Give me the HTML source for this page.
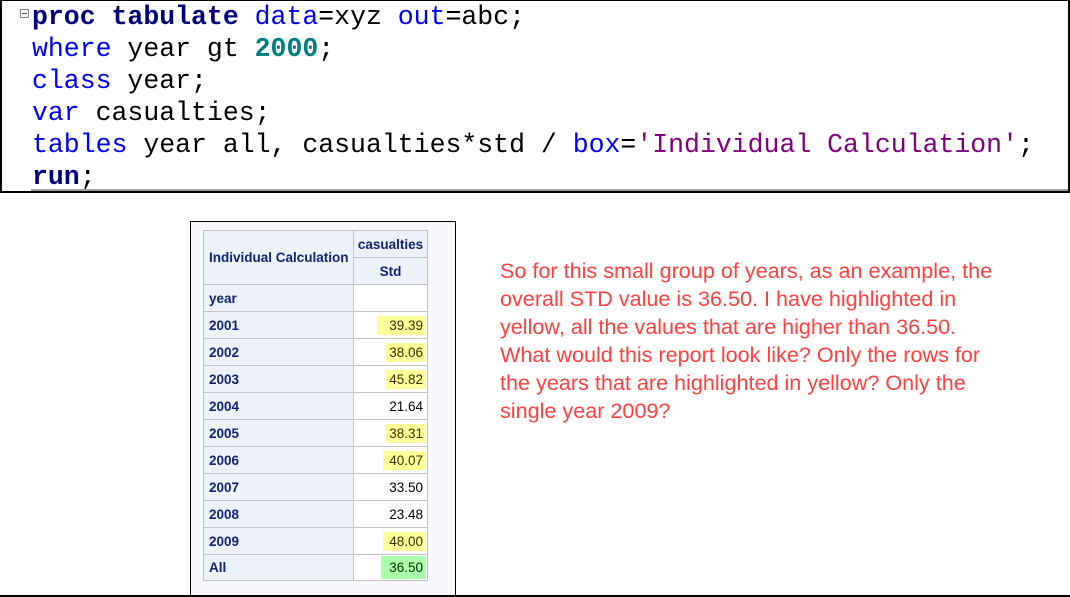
<!DOCTYPE html>
<html><head><meta charset="utf-8"><style>
*{margin:0;padding:0;box-sizing:border-box}
body{width:1070px;height:597px;background:#fff;position:relative;overflow:hidden;font-family:"Liberation Sans",sans-serif}
#code{position:absolute;left:0;top:0;width:1070px;height:193px;border:2px solid #000;border-top:1px solid #000;}
#code .gl{position:absolute;left:29px;right:0;top:188px;height:2px;background:#a0a0a0}
#code pre{position:absolute;left:30px;top:0px;font-family:"Liberation Mono",monospace;font-size:26.5px;line-height:32px;color:#000}
.k{color:#000080;font-weight:bold}.b{color:#0000ff}.n{color:#008080;font-weight:bold}.s{color:#800080}
#tog{position:absolute;left:18px;top:8px;width:9px;height:9px;border:1px solid #888;background:#fff}
#tog:after{content:"";position:absolute;left:1px;top:3px;width:5px;height:1px;background:#444}
#panel{position:absolute;left:190px;top:221px;width:266px;height:376px;border:1px solid #000;border-bottom:none;background:#f8f9fd}
.c{position:absolute;border:1px solid #c1c1c1;font-size:13.5px;font-weight:bold;color:#112277;display:flex;align-items:center}
.h{background:#edf2f9}
.v{background:#fff;justify-content:flex-end;font-weight:normal;color:#000;padding-right:4px}
.hl{padding:2px 3px;margin-right:-3px}
.y{background:#ffff99;color:#333300}.g{background:#aaffaa;color:#003300}
#note{position:absolute;left:500px;top:257px;font-size:21.6px;line-height:28px;color:#ff4040;white-space:nowrap}
#bl{position:absolute;left:0;top:595px;width:1070px;height:2px;background:#000}
</style></head><body>
<div id="code"><div id="tog"></div><div class="gl"></div>
<pre><span class="k">proc tabulate</span> <span class="b">data</span>=xyz <span class="b">out</span>=abc;
<span class="b">where</span> year gt <span class="n">2000</span>;
<span class="b">class</span> year;
<span class="b">var</span> casualties;
<span class="b">tables</span> year all, casualties*std / <span class="b">box</span>=<span class="s">'Individual Calculation'</span>;
<span class="k">run</span>;</pre></div>
<div id="panel"></div>
<div class="c h" style="left:203px;top:230px;width:151px;height:55px;padding-left:5px">Individual Calculation</div>
<div class="c h" style="left:353px;top:230px;width:75px;height:28px;justify-content:center">casualties</div>
<div class="c h" style="left:353px;top:257px;width:75px;height:28px;justify-content:center">Std</div>
<div class="c h" style="left:203px;top:284px;width:151px;height:28px;padding-left:5px">year</div>
<div class="c" style="left:353px;top:284px;width:75px;height:28px;background:#fff"></div>

<div class="c h" style="left:203px;top:311px;width:151px;height:28px;padding-left:5px">2001</div>
<div class="c v" style="left:353px;top:311px;width:75px;height:28px"><span class="hl y" style="padding-left:12px">39.39</span></div>
<div class="c h" style="left:203px;top:338px;width:151px;height:28px;padding-left:5px">2002</div>
<div class="c v" style="left:353px;top:338px;width:75px;height:28px"><span class="hl y">38.06</span></div>
<div class="c h" style="left:203px;top:365px;width:151px;height:28px;padding-left:5px">2003</div>
<div class="c v" style="left:353px;top:365px;width:75px;height:28px"><span class="hl y">45.82</span></div>
<div class="c h" style="left:203px;top:392px;width:151px;height:28px;padding-left:5px">2004</div>
<div class="c v" style="left:353px;top:392px;width:75px;height:28px">21.64</div>
<div class="c h" style="left:203px;top:419px;width:151px;height:28px;padding-left:5px">2005</div>
<div class="c v" style="left:353px;top:419px;width:75px;height:28px"><span class="hl y">38.31</span></div>
<div class="c h" style="left:203px;top:446px;width:151px;height:28px;padding-left:5px">2006</div>
<div class="c v" style="left:353px;top:446px;width:75px;height:28px"><span class="hl y" style="padding-left:6px">40.07</span></div>
<div class="c h" style="left:203px;top:473px;width:151px;height:28px;padding-left:5px">2007</div>
<div class="c v" style="left:353px;top:473px;width:75px;height:28px">33.50</div>
<div class="c h" style="left:203px;top:500px;width:151px;height:28px;padding-left:5px">2008</div>
<div class="c v" style="left:353px;top:500px;width:75px;height:28px">23.48</div>
<div class="c h" style="left:203px;top:527px;width:151px;height:28px;padding-left:5px">2009</div>
<div class="c v" style="left:353px;top:527px;width:75px;height:28px"><span class="hl y" style="padding-left:6px">48.00</span></div>
<div class="c h" style="left:203px;top:554px;width:151px;height:27px;padding-left:5px">All</div>
<div class="c v" style="left:353px;top:554px;width:75px;height:27px"><span class="hl g" style="padding-left:8px;padding-top:4px;padding-bottom:4px">36.50</span></div>

<div id="note">So for this small group of years, as an example, the<br>overall STD value is 36.50. I have highlighted in<br>yellow, all the values that are higher than 36.50.<br>What would this report look like? Only the rows for<br>the years that are highlighted in yellow? Only the<br>single year 2009?</div>
<div id="bl"></div>
</body></html>
